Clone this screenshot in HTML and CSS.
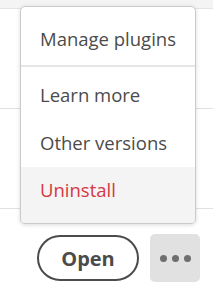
FILE: index.html
```html
<!DOCTYPE html>
<html lang="en">
<head>
    <title>Plugin menu</title>
    <link rel="stylesheet" href="styles.css">
</head>
<body>
    <div class="page">
        <div class="top-band"></div>
        <div class="row"></div>
        <div class="row"></div>
        <div class="actions">
            <button class="open-button">Open</button>
            <button class="more-button" aria-label="More">
                <span class="dot"></span><span class="dot"></span><span class="dot"></span>
            </button>
        </div>

        <div class="menu">
            <div class="menu-item">Manage plugins</div>
            <div class="menu-divider"></div>
            <div class="menu-item">Learn more</div>
            <div class="menu-item">Other versions</div>
            <div class="menu-item danger">Uninstall</div>
        </div>
    </div>
</body>
</html>
```

FILE: styles.css
```css
body{
    margin: 0;
    background-color: #ffffff;
    font-family: "Open Sans", "Noto Sans", sans-serif;
}
.page{
    position: relative;
    width: 213px;
    height: 300px;
    overflow: hidden;
}
.top-band{
    height: 8px;
    background-color: #f4f4f4;
    border-bottom: 1px solid #e4e4e4;
}
.row{
    height: 99px;
    border-bottom: 1px solid #e1e1e1;
}
.actions{
    display: flex;
    justify-content: flex-end;
    align-items: center;
    gap: 11px;
    padding: 25px 13px 0 0;
}
.open-button{
    width: 102px;
    height: 46px;
    border: 2px solid #4b4b4b;
    border-radius: 23px;
    background-color: #ffffff;
    color: #4b4b4b;
    font-family: inherit;
    font-size: 20px;
    font-weight: 700;
}
.more-button{
    width: 50px;
    height: 48px;
    border: none;
    border-radius: 5px;
    background-color: #e1e1e1;
    display: flex;
    justify-content: center;
    align-items: center;
    gap: 5px;
}
.dot{
    width: 7px;
    height: 7px;
    border-radius: 50%;
    background-color: #6e6e6e;
}
.menu{
    position: absolute;
    left: 20px;
    top: 6px;
    width: 174px;
    padding-top: 8px;
    background-color: #ffffff;
    border: 1px solid #cacaca;
    border-radius: 5px;
    box-shadow: 0 1px 4px rgba(0, 0, 0, 0.15);
    overflow: hidden;
}
.menu-item{
    height: 48px;
    line-height: 48px;
    padding-left: 19px;
    font-size: 18.5px;
    color: #4b4b4b;
}
.menu-divider{
    height: 2px;
    margin: 2px 0 4px;
    background-color: #e6e6e6;
}
.menu-item.danger{
    height: 46px;
    line-height: 46px;
    padding-bottom: 10px;
    color: #d7373f;
    background-color: #f4f4f4;
}
```
